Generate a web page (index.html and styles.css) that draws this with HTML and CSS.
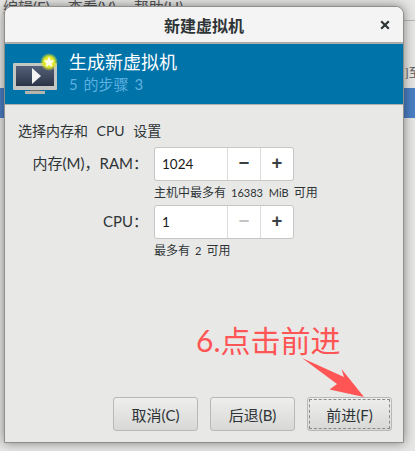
FILE: index.html
```html
<!DOCTYPE html>
<html lang="zh-CN">
<head>
    <meta charset="UTF-8">
    <meta name="viewport" content="width=device-width, initial-scale=1.0">
    <title>新建虚拟机</title>
    <link rel="stylesheet" href="styles.css">
</head>
<body>
    <!-- Main window behind the dialog -->
    <div class="backdrop">
        <div class="backdrop-menu"><span>编辑(E)</span><span>查看(V)</span><span>帮助(H)</span></div>
        <div class="backdrop-line"></div>
        <div class="backdrop-side">]至</div>
        <div class="backdrop-blue"></div>
    </div>

    <div class="dialog">
        <div class="titlebar">
            <span class="title">新建虚拟机</span>
            <svg class="close" width="10" height="10" viewBox="0 0 10 10">
                <path d="M1.2 1.2 L8.8 8.8 M8.8 1.2 L1.2 8.8" stroke="#2e3436" stroke-width="2.2" fill="none"/>
            </svg>
        </div>
        <div class="banner">
            <svg class="banner-icon" width="46" height="42" viewBox="0 0 46 42">
                <defs>
                    <radialGradient id="glow">
                        <stop offset="0" stop-color="#fbff6a"/>
                        <stop offset="0.6" stop-color="#dfe620"/>
                        <stop offset="1" stop-color="#dfe620" stop-opacity="0"/>
                    </radialGradient>
                    <linearGradient id="screen" x1="0" y1="0" x2="0" y2="1">
                        <stop offset="0" stop-color="#54607a"/>
                        <stop offset="1" stop-color="#2c3547"/>
                    </linearGradient>
                </defs>
                <rect x="0" y="10" width="44" height="27" rx="1" fill="#c4c6c4"/>
                <rect x="3" y="13" width="38" height="20" fill="url(#screen)"/>
                <path d="M19 15 L28 23 L19 31 Z" fill="#f4f4f4"/>
                <rect x="17" y="37" width="10" height="2" fill="#6b6b68"/>
                <rect x="12" y="38" width="20" height="3" fill="#b5b5b0"/>
                <circle cx="36" cy="9" r="9" fill="url(#glow)"/>
                <path d="M36 3.500 L37.600 7.300 L41.500 7.600 L38.500 10.200 L39.500 14.200 L36 12 L32.500 14.200 L33.500 10.200 L30.500 7.600 L34.400 7.300 Z" fill="#fffdf0"/>
            </svg>
            <div class="banner-text">
                <div class="banner-title">生成新虚拟机</div>
                <div class="banner-step">5 的步骤 3</div>
            </div>
        </div>
        <div class="content">
            <div class="section-title">选择内存和 CPU 设置</div>
            <div class="form">
                <div class="field-label">内存(M)，RAM：</div>
                <div class="spin">
                    <div class="spin-value">1024</div>
                    <div class="spin-btn">−</div>
                    <div class="spin-btn">+</div>
                </div>
                <div class="hint">主机中最多有 <span class="hint-num">16383 MiB</span> 可用</div>
                <div class="field-label">CPU：</div>
                <div class="spin">
                    <div class="spin-value">1</div>
                    <div class="spin-btn disabled">−</div>
                    <div class="spin-btn">+</div>
                </div>
                <div class="hint">最多有 <span class="hint-num">2</span> 可用</div>
            </div>
        </div>
        <div class="actions">
            <button class="btn">取消(C)</button>
            <button class="btn">后退(B)</button>
            <button class="btn focused">前进(F)</button>
        </div>
    </div>

    <!-- Annotation drawn over the screenshot -->
    <div class="note">6.点击前进</div>
    <svg class="note-arrow" width="70" height="45" viewBox="0 0 70 45">
        <path d="M2 1 L44 20 L41.500 12 L64 40 L29.500 32.500 L37 27 Z" fill="#ff5555"/>
    </svg>
</body>
</html>
```

FILE: styles.css
```css
html, body {
    margin: 0;
    height: 451px;
    overflow: hidden;
}
body {
    position: relative;
    background-color: #e6e6e4;
    font-family: Lato, "Noto Sans CJK SC", sans-serif;
    color: #2e3436;
    padding: 6px 11px 0 4px;
    box-sizing: border-box;
}
.backdrop-menu {
    position: absolute;
    left: 3px;
    top: -3px;
    display: flex;
    gap: 18px;
    font-size: 15px;
    line-height: 20px;
    color: #555;
    white-space: nowrap;
}
.backdrop-line {
    position: absolute;
    left: 400px;
    top: 20px;
    width: 15px;
    height: 1px;
    background-color: #b8b8b6;
}
.backdrop-side {
    position: absolute;
    left: 405px;
    top: 65px;
    font-size: 12px;
    line-height: 16px;
    color: #555;
    white-space: nowrap;
}
.backdrop-blue {
    position: absolute;
    left: 0;
    right: 0;
    top: 88px;
    height: 30px;
    background-color: #4a7fc4;
}
.dialog {
    position: relative;
    width: 400px;
    height: 437px;
    background-color: #e8e8e7;
    border: 1px solid #8e8e8c;
    border-radius: 8px 8px 0 0;
    box-sizing: border-box;
    box-shadow: 0 0 11px rgba(0, 0, 0, 0.45);
    display: flex;
    flex-direction: column;
}
.titlebar {
    height: 35px;
    flex-shrink: 0;
    background-color: #f4f4f4;
    border-bottom: 1px solid #a9a9a7;
    border-radius: 7px 7px 0 0;
    display: flex;
    align-items: center;
    justify-content: center;
    position: relative;
}
.title {
    font-size: 16px;
    font-weight: bold;
}
.close {
    position: absolute;
    right: 13px;
    top: 13px;
}
.banner {
    height: 60px;
    flex-shrink: 0;
    background-color: #0073a9;
    border: 1px solid #b0b0ae;
    border-width: 1px 0;
    display: flex;
    align-items: center;
    gap: 10px;
    padding-left: 8px;
}
.banner-icon {
    margin-top: -1px;
}
.banner-text {
    margin-top: -3px;
}
.banner-title {
    color: #fff;
    font-size: 18px;
    line-height: 22px;
}
.banner-step {
    color: #5cb1e0;
    font-size: 15px;
    line-height: 20px;
    margin-top: 1px;
    word-spacing: 2px;
}
.content {
    flex: 1;
    padding: 16px 0 0 13px;
}
.section-title {
    font-size: 14px;
    line-height: 20px;
    word-spacing: 5px;
}
.form {
    display: grid;
    grid-template-columns: 130px 140px;
    grid-auto-rows: min-content;
    column-gap: 6px;
    margin-top: 6px;
}
.field-label {
    font-size: 15px;
    line-height: 32px;
    text-align: right;
    white-space: nowrap;
}
.spin {
    display: flex;
    height: 34px;
    background-color: #fff;
    border: 1px solid #c6c6c4;
    border-radius: 3px;
    box-sizing: border-box;
}
.spin-value {
    flex: 1;
    font-size: 13.5px;
    line-height: 32px;
    padding-left: 7px;
    color: #1a1a1a;
}
.spin-btn {
    width: 32px;
    border-left: 1px solid #dcdcda;
    text-align: center;
    font-family: "Noto Sans", sans-serif;
    font-size: 19px;
    line-height: 30px;
    font-weight: bold;
    color: #3a3f41;
}
.spin-btn.disabled {
    color: #c4c4c2;
}
.hint {
    grid-column: 2;
    font-size: 12px;
    line-height: 24px;
    white-space: nowrap;
    word-spacing: 2px;
    margin-right: -30px;
}
.hint-num {
    font-size: 11px;
    word-spacing: 3px;
}
.actions {
    display: flex;
    justify-content: flex-end;
    gap: 12px;
    padding: 0 11px 11px 0;
}
.btn {
    width: 85px;
    height: 34px;
    font-family: inherit;
    font-size: 15px;
    color: #2e3436;
    background: linear-gradient(#eeeeec, #d8d8d6);
    border: 1px solid #b8b8b6;
    border-radius: 3px;
    padding: 0;
}
.btn.focused {
    outline: 1px dashed #8a8a88;
    outline-offset: -3px;
}
.note {
    position: absolute;
    left: 196px;
    top: 320px;
    font-size: 30px;
    line-height: 40px;
    color: #ff5555;
    white-space: nowrap;
}
.note-arrow {
    position: absolute;
    left: 300px;
    top: 357px;
}
```
